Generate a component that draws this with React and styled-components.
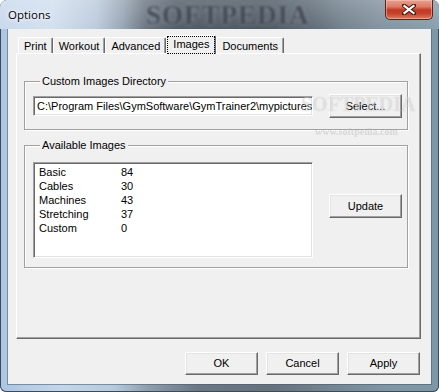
import React from 'react'
import styled, { createGlobalStyle } from 'styled-components'

const GlobalStyle = createGlobalStyle`
    html, body {
        margin: 0;
        padding: 0;
        background: #ffffff;
    }
    * {
        box-sizing: border-box;
    }
`

const Window = styled.div`
    position: relative;
    width: 439px;
    height: 392px;
    display: flex;
    flex-direction: column;
    overflow: hidden;
    border-radius: 7px 7px 6px 6px;
    font-family: "Liberation Sans", Arial, sans-serif;
    font-size: 11px;
    color: #000;
    background: linear-gradient(90deg, #abc6e2 0%, #c3d6eb 14%, #b7c9dc 26%, #8d9cab 34%, #6b7783 45%, #66717c 62%, #74838f 74%, #8096a3 88%, #7d98a6 100%);
    box-shadow: inset 0 0 0 1px #3d4b58;
`

const TitleBar = styled.div`
    position: relative;
    height: 29px;
    flex: none;
    display: flex;
    align-items: flex-start;
    padding-left: 8px;
    background:
        linear-gradient(180deg, rgba(255,255,255,0.18) 0px, rgba(255,255,255,0) 29px),
        linear-gradient(90deg, #c9d9ec 0%, #d3e0ef 12%, #bccbdc 22%, #98a6b4 28%, #6d7884 33%, #525c67 40%, #4e5862 60%, #5d6975 70%, #74838f 78%, #83929f 86%, #8aa0ad 100%);
`

const Title = styled.div`
    margin-top: 7px;
    font-family: "Open Sans", "Noto Sans", sans-serif;
    font-size: 11.5px;
    line-height: 16px;
    color: #000;
    text-shadow: 0 0 6px #fff, 0 0 3px #fff;
`

const Watermark = styled.div`
    position: absolute;
    left: ${p => p.$left}px;
    top: ${p => p.$top}px;
    font-family: "Liberation Serif", serif;
    font-weight: bold;
    font-size: ${p => p.$size}px;
    letter-spacing: ${p => p.$spacing || 0}px;
    color: ${p => p.$color};
    text-shadow: ${p => p.$glow || 'none'};
    filter: blur(${p => p.$blur}px);
    pointer-events: none;
    white-space: nowrap;
`

const CloseButton = styled.div`
    width: 48px;
    height: 20px;
    margin: 0 6px 0 auto;
    border: 1px solid #5e2218;
    border-top: none;
    border-radius: 0 0 5px 5px;
    background: linear-gradient(180deg, #e9a190 0%, #dc7c66 35%, #c13a25 52%, #c4412b 70%, #e07a62 100%);
    box-shadow: inset 0 0 0 1px rgba(255, 210, 200, 0.45);
    display: flex;
    align-items: center;
    justify-content: center;
`

const Client = styled.div`
    flex: 1;
    margin: 0 8px 8px 8px;
    padding: 6px 10px 0 8px;
    background: #f0f0f0;
    box-shadow: 0 0 0 1px rgba(70, 90, 110, 0.55);
    display: flex;
    flex-direction: column;
`

const TabStrip = styled.div`
    position: relative;
    z-index: 2;
    height: 18px;
    display: flex;
    align-items: flex-end;
    padding-left: 2px;
`

const Tab = styled.div`
    height: ${p => (p.$active ? 19 : 16)}px;
    margin-bottom: ${p => (p.$active ? -1 : 0)}px;
    background: #f0f0f0;
    border-top: 1px solid #fff;
    border-left: 1px solid #fff;
    border-right: 1px solid #696969;
    box-shadow: inset -1px 0 0 #a0a0a0;
    border-radius: 2px 2px 0 0;
    display: flex;
`

const TabLabel = styled.div`
    display: flex;
    align-items: center;
    padding: 0 ${p => (p.$active ? 6 : 5)}px ${p => (p.$active ? 2 : 0)}px;
    outline: ${p => (p.$active ? '1px dotted #000' : 'none')};
    outline-offset: -1px;
`

const Panel = styled.div`
    height: 286px;
    border-top: 1px solid #fff;
    border-left: 1px solid #fff;
    border-right: 1px solid #696969;
    border-bottom: 1px solid #696969;
    box-shadow: inset -1px -1px 0 #a0a0a0;
    padding: 21px 12px 0 7px;
`

const Group = styled.fieldset`
    margin: ${p => p.$gap || 0}px 0 0 0;
    min-width: 0;
    padding: ${p => p.$pad};
    border: 1px solid #a0a0a0;
    box-shadow: 1px 1px 0 #fff, inset 1px 1px 0 #fff;
    display: flex;
    align-items: ${p => p.$align || 'center'};
    justify-content: space-between;
`

const Legend = styled.legend`
    margin-left: 7px;
    padding: 0 2px;
    line-height: 13px;
    background: #f0f0f0;
`

const PathField = styled.div`
    width: 280px;
    height: 20px;
    background: #fff;
    border: 1px solid;
    border-color: #a0a0a0 #fff #fff #a0a0a0;
    box-shadow: inset 1px 1px 0 #696969, inset -1px -1px 0 #e3e3e3;
    padding: 0 0 0 3px;
    display: flex;
    align-items: center;
    white-space: nowrap;
    overflow: hidden;
`

const Button = styled.div`
    width: 73px;
    height: ${p => p.$h || 23}px;
    margin-top: ${p => p.$top || 0}px;
    flex: none;
    background: #f0f0f0;
    border: 1px solid;
    border-color: #fff #696969 #696969 #fff;
    box-shadow: inset -1px -1px 0 #a0a0a0, inset 1px 1px 0 #e3e3e3;
    display: flex;
    align-items: center;
    justify-content: center;
    padding-bottom: 1px;
`

const ListBox = styled.div`
    width: 280px;
    height: 96px;
    background: #fff;
    border: 1px solid;
    border-color: #a0a0a0 #fff #fff #a0a0a0;
    box-shadow: inset 1px 1px 0 #696969, inset -1px -1px 0 #e3e3e3;
    padding: 2px 0 0 5px;
`

const ListRow = styled.div`
    display: flex;
    height: 14px;
    line-height: 14px;
`

const ItemName = styled.div`
    width: 82px;
`

const Footer = styled.div`
    display: flex;
    justify-content: flex-end;
    gap: 8px;
    margin-top: 13px;
    padding-right: 1px;
`

const images = [
    { name: 'Basic', count: 84 },
    { name: 'Cables', count: 30 },
    { name: 'Machines', count: 43 },
    { name: 'Stretching', count: 37 },
    { name: 'Custom', count: 0 },
]

const tabs = ['Print', 'Workout', 'Advanced', 'Images', 'Documents']

function App() {
    return (
        <>
            <GlobalStyle />
            <Window>
                <TitleBar>
                    <Title>Options</Title>
                    <Watermark
                        $left={146} $top={0} $size={27} $spacing={1}
                        $color="rgba(52,60,70,0.9)" $glow="0 0 3px rgba(190,200,212,0.85)" $blur={1.4}
                    >
                        SOFTPEDIA
                    </Watermark>
                    <CloseButton>
                        <svg width="14" height="11" viewBox="0 0 14 11">
                            <path d="M2 1.5 L12 9.5 M12 1.5 L2 9.5" stroke="#4a1c14" strokeWidth="4.2" strokeLinecap="square" />
                            <path d="M2.5 2 L11.5 9 M11.5 2 L2.5 9" stroke="#fff" strokeWidth="2.2" strokeLinecap="square" />
                        </svg>
                    </CloseButton>
                </TitleBar>

                <Client>
                    <TabStrip>
                        {tabs.map(t => (
                            <Tab key={t} $active={t === 'Images'}>
                                <TabLabel $active={t === 'Images'}>{t}</TabLabel>
                            </Tab>
                        ))}
                    </TabStrip>

                    <Panel>
                        <Group $pad="6px 5px 11px 8px">
                            <Legend>Custom Images Directory</Legend>
                            <PathField>C:\Program Files\GymSoftware\GymTrainer2\mypictures</PathField>
                            <Button $h={24}>Select...</Button>
                        </Group>

                        <Group $gap={9} $pad="10px 5px 9px 8px" $align="flex-start">
                            <Legend>Available Images</Legend>
                            <ListBox>
                                {images.map(img => (
                                    <ListRow key={img.name}>
                                        <ItemName>{img.name}</ItemName>
                                        <div>{img.count}</div>
                                    </ListRow>
                                ))}
                            </ListBox>
                            <Button $h={24} $top={32}>Update</Button>
                        </Group>
                    </Panel>

                    <Footer>
                        <Button>OK</Button>
                        <Button>Cancel</Button>
                        <Button>Apply</Button>
                    </Footer>
                </Client>

                <Watermark
                    $left={301} $top={93} $size={20} $color="rgba(255,255,255,0.3)"
                    $glow="0 0 1px rgba(150,150,150,0.35)" $blur={0.4}
                >
                    SOFTPEDIA
                </Watermark>
                <Watermark $left={315} $top={126} $size={10} $color="rgba(195,195,195,0.55)" $blur={0.3}>www.softpedia.com</Watermark>
            </Window>
        </>
    )
}

export default App
